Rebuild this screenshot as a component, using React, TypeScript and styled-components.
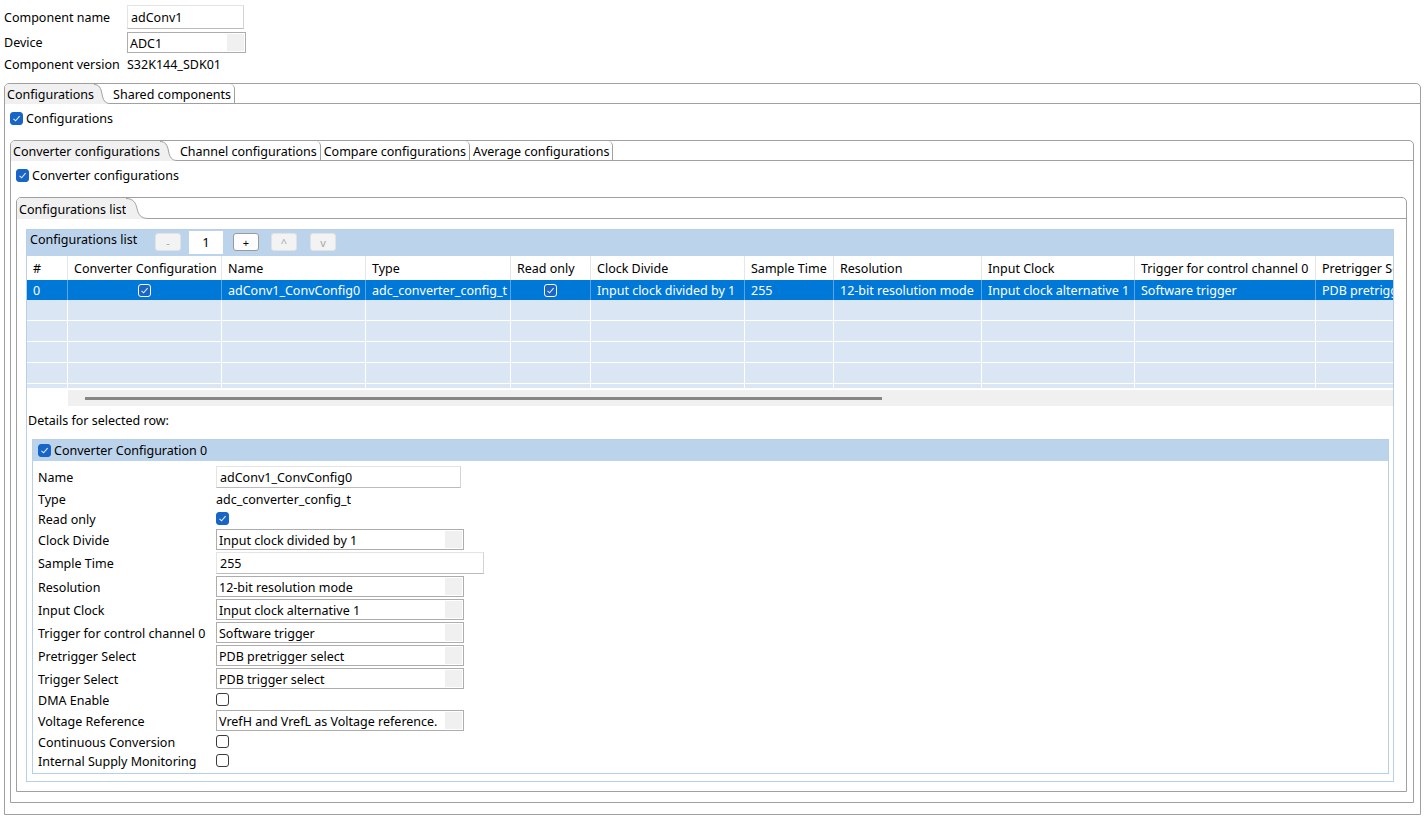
import React from "react";
import styled, { createGlobalStyle } from "styled-components";

const GlobalStyle = createGlobalStyle`
  html, body {
    margin: 0;
    padding: 0;
    background: #fff;
  }
  body {
    font-family: "Noto Sans", "Open Sans", sans-serif;
    font-size: 12.5px;
    line-height: 17px;
    color: #000;
  }
  * {
    box-sizing: border-box;
  }
`;

const BORDER = "#a0a0a0";
const SECTION_BORDER = "#b8cfe6";
const BAR_BLUE = "#bcd3ec";

/* ---------- top header ---------- */

const Header = styled.div`
    display: grid;
    grid-template-columns: 123px auto;
    align-items: center;
    row-gap: 3px;
    padding: 5px 0 0 4px;
    margin-bottom: 10px;
`

const TextInput = styled.div<{ $w: number; $h: number }>`
    width: ${p => p.$w}px;
    height: ${p => p.$h}px;
    display: flex;
    align-items: center;
    padding: 1px 0 0 3px;
    background: #fff;
    border: 1px solid #e4e4e4;
    border-bottom-color: #bcbcbc;
    border-right-color: #d4d4d4;
    white-space: nowrap;
`

const Combo = styled.div<{ $w: number; $h: number }>`
    width: ${p => p.$w}px;
    height: ${p => p.$h}px;
    display: flex;
    align-items: center;
    background: #fff;
    border: 1px solid #adadad;
    white-space: nowrap;
`

const ComboText = styled.span`
    flex: 1;
    padding: 1px 0 0 2px;
    overflow: hidden;
`

const ComboButton = styled.span`
    width: 17px;
    align-self: stretch;
    margin: 1px;
    background: #f0f0f0;
`

/* ---------- tab folders ---------- */

const Folder = styled.div<{ $pad: string }>`
    display: flex;
    flex-direction: column;
    border: 1px solid ${BORDER};
    border-radius: 5px 5px 0 0;

    & > .folder-body {
        padding: ${p => p.$pad};
    }
`

const TabStrip = styled.div<{ $h: number }>`
    display: flex;
    height: ${p => p.$h}px;
    flex: none;
`

const SelectedTab = styled.div`
    display: flex;
    align-items: stretch;
    flex: none;

    & > span {
        display: flex;
        align-items: center;
        padding: 1px 0 0 2px;
        background: #f0f0f0;
        border-top-left-radius: 4px;
        white-space: nowrap;
    }
`

const Tab = styled.div`
    display: flex;
    align-items: center;
    flex: none;
    padding: 1px 3px 0 3px;
    border-bottom: 1px solid ${BORDER};
    border-right: 1px solid ${BORDER};
    border-top-right-radius: 5px;
    white-space: nowrap;
`

const TabFiller = styled.div`
    flex: 1;
    border-bottom: 1px solid ${BORDER};
`

const FolderBody = styled.div`
    display: flex;
    flex-direction: column;
`

const CheckRow = styled.div<{ $mb: number }>`
    display: flex;
    align-items: center;
    gap: 3px;
    height: 20px;
    margin-bottom: ${p => p.$mb}px;
`

/* ---------- checkbox ---------- */

const Box = styled.span<{ $checked?: boolean; $outlined?: boolean }>`
    display: inline-flex;
    align-items: center;
    justify-content: center;
    flex: none;
    width: 13px;
    height: 13px;
    border-radius: 3px;
    background: ${p => (p.$checked ? "#1765c6" : "#fff")};
    border: 1px solid ${p => (p.$checked ? (p.$outlined ? "#fff" : "#1765c6") : "#3c3c3c")};
`

const Check: React.FC<{ checked?: boolean; outlined?: boolean }> = ({ checked, outlined }) => (
    <Box $checked={checked} $outlined={outlined}>
        {checked && (
            <svg width="9" height="9" viewBox="0 0 9 9">
                <polyline points="1.5,4.8 3.6,6.8 7.6,2.2" fill="none" stroke="#e6eefa" strokeWidth="1.1" />
            </svg>
        )}
    </Box>
);

/* ---------- configurations list section ---------- */

const Section = styled.div`
    display: flex;
    flex-direction: column;
    border: 1px solid ${SECTION_BORDER};
`

const ToolBar = styled.div`
    display: flex;
    align-items: flex-start;
    height: 26px;
    padding-left: 3px;
    background: ${BAR_BLUE};
`

const ToolLabel = styled.span`
    width: 125px;
    line-height: 20px;
`

const ToolButton = styled.span<{ $ml: number; $enabled?: boolean }>`
    display: flex;
    align-items: center;
    justify-content: center;
    width: 26px;
    height: 18px;
    margin: 3px 0 0 ${p => p.$ml}px;
    border-radius: 3px;
    font-size: 11px;
    background: ${p => (p.$enabled ? "#fdfdfd" : "#f3f3f3")};
    border: 1px solid ${p => (p.$enabled ? "#9a9a9a" : "#e2e2e2")};
    color: ${p => (p.$enabled ? "#000" : "#a8a8a8")};
`

const Spinner = styled.span<{ $ml: number }>`
    display: flex;
    align-items: center;
    justify-content: center;
    width: 34px;
    height: 23px;
    margin: 1px 0 0 ${p => p.$ml}px;
    background: #fff;
    font-size: 13px;
`

const COLS = "41px 154px 144px 145px 80px 154px 89px 148px 153px 181px 120px";

const TableView = styled.div`
    height: 132px;
    overflow: hidden;
`

const TRow = styled.div<{ $kind: "head" | "selected" | "empty"; $h: number }>`
    display: grid;
    grid-template-columns: ${COLS};
    height: ${p => p.$h}px;
    background: ${p => (p.$kind === "head" ? "#fff" : p.$kind === "selected" ? "#0078d7" : "#dae6f3")};
    color: ${p => (p.$kind === "selected" ? "#fff" : "#000")};
    border-bottom: ${p => (p.$kind === "empty" ? "1px solid #fff" : "none")};

    & > div {
        border-right: 1px solid ${p => (p.$kind === "head" ? "#e6e6e6" : p.$kind === "selected" ? "#5aa5e6" : "#fff")};
    }
`

const Cell = styled.div<{ $center?: boolean }>`
    display: flex;
    align-items: center;
    justify-content: ${p => (p.$center ? "center" : "flex-start")};
    padding: 1px 0 0 ${p => (p.$center ? 0 : 6)}px;
    white-space: nowrap;
    overflow: hidden;
`

const ScrollBar = styled.div`
    display: flex;
    height: 16px;
    margin-top: 2px;
`

const ScrollGutter = styled.div`
    width: 41px;
    background: #fff;
`

const ScrollTrack = styled.div`
    flex: 1;
    display: flex;
    align-items: center;
    background: #f0f0f0;
    padding-left: 17px;
`

const ScrollThumb = styled.div`
    width: 797px;
    height: 3px;
    background: #868686;
`

const DetailsCaption = styled.div`
    margin: 6px 0 0 1px;
`

const Group = styled.div`
    display: flex;
    flex-direction: column;
    margin: 10px 4px 7px 5px;
    border: 1px solid ${SECTION_BORDER};
`

const GroupHeader = styled.div`
    display: flex;
    align-items: center;
    gap: 3px;
    height: 21px;
    padding-left: 5px;
    background: ${BAR_BLUE};
`

const GroupBody = styled.div`
    display: flex;
    flex-direction: column;
    padding: 4px 0 3px 5px;
`

const PropRow = styled.div<{ $h: number }>`
    display: grid;
    grid-template-columns: 178px auto;
    align-items: center;
    height: ${p => p.$h}px;

    & > span {
        padding-top: 1px;
        white-space: nowrap;
    }
`

const PropValue = styled.div`
    display: flex;
    align-items: center;
`

/* ---------- data ---------- */

const headers = [
    "#", "Converter Configuration", "Name", "Type", "Read only", "Clock Divide",
    "Sample Time", "Resolution", "Input Clock", "Trigger for control channel 0", "Pretrigger Select",
];

type Prop =
    | { label: string; kind: "input"; value: string; w: number }
    | { label: string; kind: "text"; value: string }
    | { label: string; kind: "check"; checked: boolean }
    | { label: string; kind: "combo"; value: string };

const props: Prop[] = [
    { label: "Name", kind: "input", value: "adConv1_ConvConfig0", w: 245 },
    { label: "Type", kind: "text", value: "adc_converter_config_t" },
    { label: "Read only", kind: "check", checked: true },
    { label: "Clock Divide", kind: "combo", value: "Input clock divided by 1" },
    { label: "Sample Time", kind: "input", value: "255", w: 268 },
    { label: "Resolution", kind: "combo", value: "12-bit resolution mode" },
    { label: "Input Clock", kind: "combo", value: "Input clock alternative 1" },
    { label: "Trigger for control channel 0", kind: "combo", value: "Software trigger" },
    { label: "Pretrigger Select", kind: "combo", value: "PDB pretrigger select" },
    { label: "Trigger Select", kind: "combo", value: "PDB trigger select" },
    { label: "DMA Enable", kind: "check", checked: false },
    { label: "Voltage Reference", kind: "combo", value: "VrefH and VrefL as Voltage reference." },
    { label: "Continuous Conversion", kind: "check", checked: false },
    { label: "Internal Supply Monitoring", kind: "check", checked: false },
];

const rowHeight = (p: Prop) =>
    p.kind === "input" ? 24 : p.kind === "text" ? 20 : p.kind === "check" ? 19 : 23;

const TabCurve: React.FC<{ w: number }> = ({ w }) => (
    <svg width={w} height="100%" viewBox="0 0 16 20" preserveAspectRatio="none">
        <path d="M0,0 C5,0 7,4 8,10 C9,16 11,19.5 16,19.5 L16,20 L0,20 Z" fill="#f0f0f0" />
        <path
            d="M0,0.5 C5,0.5 7,4 8,10 C9,16 11,19.5 16,19.5"
            fill="none"
            stroke={BORDER}
            strokeWidth="1"
            vectorEffect="non-scaling-stroke"
        />
    </svg>
);

const Tabs: React.FC<{ selected: string; others: string[]; h: number; curve: number }> = ({ selected, others, h, curve }) => (
    <TabStrip $h={h}>
        <SelectedTab>
            <span>{selected}</span>
            <TabCurve w={curve} />
        </SelectedTab>
        {others.map(t => <Tab key={t}>{t}</Tab>)}
        <TabFiller />
    </TabStrip>
);

const App = () => {
    return (
        <>
            <GlobalStyle />
            <Header>
                <span>Component name</span>
                <TextInput $w={117} $h={24}>adConv1</TextInput>
                <span>Device</span>
                <Combo $w={119} $h={21}>
                    <ComboText>ADC1</ComboText>
                    <ComboButton />
                </Combo>
                <span>Component version</span>
                <span>S32K144_SDK01</span>
            </Header>

            <div style={{ margin: "0 5px 0 4px" }}>
                <Folder $pad="4px 6px 11px 5px">
                    <Tabs selected="Configurations" others={["Shared components"]} h={20} curve={16} />
                    <FolderBody className="folder-body">
                        <CheckRow $mb={12}>
                            <Check checked />
                            <span>Configurations</span>
                        </CheckRow>

                        <Folder $pad="4px 6px 10px 5px">
                            <Tabs
                                selected="Converter configurations"
                                others={["Channel configurations", "Compare configurations", "Average configurations"]}
                                h={20}
                                curve={17}
                            />
                            <FolderBody className="folder-body">
                                <CheckRow $mb={12}>
                                    <Check checked />
                                    <span>Converter configurations</span>
                                </CheckRow>

                                <Folder $pad="10px 12px 9px 9px">
                                    <Tabs selected="Configurations list" others={[]} h={21} curve={22} />
                                    <FolderBody className="folder-body">
                                        <Section>
                                            <ToolBar>
                                                <ToolLabel>Configurations list</ToolLabel>
                                                <ToolButton $ml={0}>-</ToolButton>
                                                <Spinner $ml={8}>1</Spinner>
                                                <ToolButton $ml={10} $enabled>+</ToolButton>
                                                <ToolButton $ml={12}>^</ToolButton>
                                                <ToolButton $ml={13}>v</ToolButton>
                                            </ToolBar>
                                            <TableView>
                                                <TRow $kind="head" $h={24}>
                                                    {headers.map(h => <Cell key={h}>{h}</Cell>)}
                                                </TRow>
                                                <TRow $kind="selected" $h={20}>
                                                    <Cell>0</Cell>
                                                    <Cell $center><Check checked outlined /></Cell>
                                                    <Cell>adConv1_ConvConfig0</Cell>
                                                    <Cell>adc_converter_config_t</Cell>
                                                    <Cell $center><Check checked outlined /></Cell>
                                                    <Cell>Input clock divided by 1</Cell>
                                                    <Cell>255</Cell>
                                                    <Cell>12-bit resolution mode</Cell>
                                                    <Cell>Input clock alternative 1</Cell>
                                                    <Cell>Software trigger</Cell>
                                                    <Cell>PDB pretrigger select</Cell>
                                                </TRow>
                                                {[0, 1, 2, 3, 4].map(r => (
                                                    <TRow key={r} $kind="empty" $h={21}>
                                                        {headers.map(h => <Cell key={h} />)}
                                                    </TRow>
                                                ))}
                                            </TableView>
                                            <ScrollBar>
                                                <ScrollGutter />
                                                <ScrollTrack>
                                                    <ScrollThumb />
                                                </ScrollTrack>
                                            </ScrollBar>

                                            <DetailsCaption>Details for selected row:</DetailsCaption>

                                            <Group>
                                                <GroupHeader>
                                                    <Check checked />
                                                    <span>Converter Configuration 0</span>
                                                </GroupHeader>
                                                <GroupBody>
                                                    {props.map(p => (
                                                        <PropRow key={p.label} $h={rowHeight(p)}>
                                                            <span>{p.label}</span>
                                                            <PropValue>
                                                                {p.kind === "input" && <TextInput $w={p.w} $h={22}>{p.value}</TextInput>}
                                                                {p.kind === "text" && <span>{p.value}</span>}
                                                                {p.kind === "check" && <Check checked={p.checked} />}
                                                                {p.kind === "combo" && (
                                                                    <Combo $w={248} $h={21}>
                                                                        <ComboText>{p.value}</ComboText>
                                                                        <ComboButton />
                                                                    </Combo>
                                                                )}
                                                            </PropValue>
                                                        </PropRow>
                                                    ))}
                                                </GroupBody>
                                            </Group>
                                        </Section>
                                    </FolderBody>
                                </Folder>
                            </FolderBody>
                        </Folder>
                    </FolderBody>
                </Folder>
            </div>
        </>
    );
};

export default App;
